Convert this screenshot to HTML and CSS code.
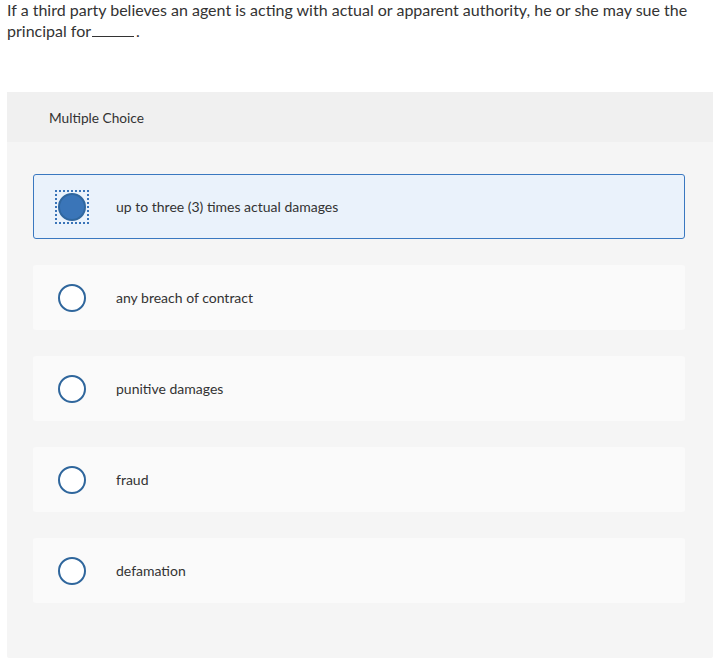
FILE: index.html
```html
<!DOCTYPE html>
<html>
<head>
<meta charset="utf-8">
<link rel="stylesheet" href="styles.css">
</head>
<body>
<div class="question">If a third party believes an agent is acting with actual or apparent authority, he or she may sue the <span class="tail">principal for<span class="blank"></span>.</span></div>
<div class="panel">
  <div class="panel-head">Multiple Choice</div>
  <div class="panel-body">
    <div class="option selected"><span class="radio-wrap"><span class="radio"></span></span><span class="label">up to three (3) times actual damages</span></div>
    <div class="option"><span class="radio-wrap"><span class="radio"></span></span><span class="label">any breach of contract</span></div>
    <div class="option"><span class="radio-wrap"><span class="radio"></span></span><span class="label">punitive damages</span></div>
    <div class="option"><span class="radio-wrap"><span class="radio"></span></span><span class="label">fraud</span></div>
    <div class="option"><span class="radio-wrap"><span class="radio"></span></span><span class="label">defamation</span></div>
  </div>
</div>
</body>
</html>
```
FILE: styles.css
```css
html, body { margin: 0; padding: 0; background: #fff; }
body { font-family: "Lato", "Open Sans", sans-serif; color: #333; padding: 0 6px 0 7px; }
.question { font-size: 16px; line-height: 21px; color: #333; margin-top: -1px; }
.tail { white-space: nowrap; }
.blank { display: inline-block; width: 42px; height: 1px; border-bottom: 1px solid #333; margin: 0 2px 0 1px; vertical-align: baseline; }
.panel { margin-top: 51px; background: #f5f5f5; border-radius: 2px; height: 566px; }
.panel-head { background: #f0f0f0; height: 50px; display: flex; align-items: center; padding-left: 42px; font-size: 13.7px; color: #333; }
.panel-body { padding: 32px 28px 0 26px; display: flex; flex-direction: column; gap: 26px; }
.option { height: 65px; box-sizing: border-box; background: #fafafa; border: 1px solid transparent; border-radius: 3px; display: flex; align-items: center; padding-left: 21px; }
.option.selected { background: #eaf2fb; border-color: #3a78c0; }
.radio-wrap { width: 34px; height: 34px; box-sizing: border-box; display: flex; align-items: center; justify-content: center; border: 2px dotted transparent; }
.selected .radio-wrap { border-color: #3a74b8; }
.radio { width: 28px; height: 28px; box-sizing: border-box; border-radius: 50%; border: 2px solid #2f669c; background: #fff; }
.selected .radio { background: #3a75b8; border-color: #30679f; }
.label { margin-left: 27px; font-size: 14px; color: #333; }
```
